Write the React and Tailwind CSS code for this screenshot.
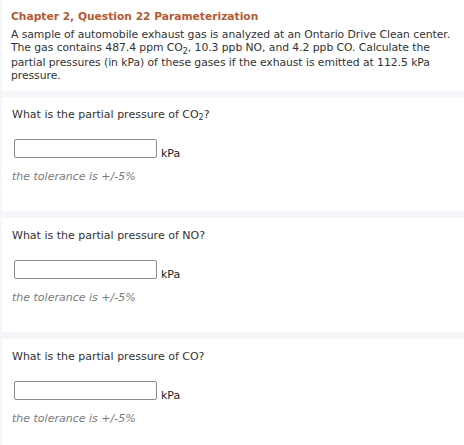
const questions = [
  { label: 'CO', sub: '2' },
  { label: 'NO' },
  { label: 'CO' },
]

function Question({ label, sub }) {
  return (
    <div className="bg-white h-[114px] pl-[10px] pt-[11px]">
      <p className="text-[11px] leading-[14px] text-[#333]">
        What is the partial pressure of {label}
        {sub && <sub className="text-[8px]">{sub}</sub>}?
      </p>
      <div className="mt-[17px] flex items-end">
        <input type="text" className="ml-[2px] w-[143px] h-[19px] border border-[#8a8a8a] rounded-[2px] bg-white outline-none" />
        <span className="ml-[4px] text-[11px] leading-[13px] text-[#222] -mb-[2px]">kPa</span>
      </div>
      <p className="mt-[12px] text-[11px] leading-[14px] italic text-[#7a7a7a]">the tolerance is +/-5%</p>
    </div>
  )
}

export default function App() {
  return (
    <div className="w-[464px] h-[445px] overflow-hidden bg-[#f4f7fa] pl-[2px] font-['DejaVu_Sans',Verdana,sans-serif]">
      <div className="bg-white h-[91px] pl-[9px] pt-[10px]">
        <h2 className="text-[10.7px] leading-[14px] font-bold text-[#b85a2f]">Chapter 2, Question 22 Parameterization</h2>
        <p className="mt-[4px] text-[10.8px] leading-[13px] text-[#333] tracking-[-0.05px]">
          A sample of automobile exhaust gas is analyzed at an Ontario Drive Clean center. The gas contains 487.4 ppm CO
          <sub className="text-[8px] static inline-block align-[-3px] leading-[8px]">2</sub>, 10.3 ppb NO, and 4.2 ppb CO. Calculate the partial pressures (in kPa) of these gases if the exhaust is emitted at 112.5 kPa pressure.
        </p>
      </div>
      <div className="flex flex-col gap-[7px] mt-[6px]">
        {questions.map((q, i) => (
          <Question key={i} {...q} />
        ))}
      </div>
    </div>
  )
}
